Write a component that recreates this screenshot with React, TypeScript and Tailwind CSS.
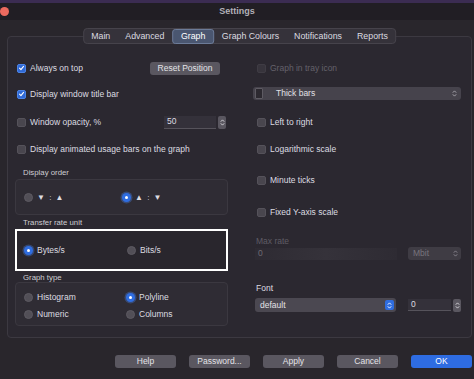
import React from 'react';

const SANS = "font-['Liberation_Sans',Arial,sans-serif]";

function CheckMark() {
    return (
        <svg viewBox="0 0 10 10" className="h-[8px] w-[8px]">
            <path d="M2.2 5.2 L4.2 7.2 L7.9 2.8" fill="none" stroke="white" strokeWidth="1.6" strokeLinecap="round" strokeLinejoin="round" />
        </svg>
    );
}

function Chevrons({ color = '#d8d7dc' }: { color?: string }) {
    return (
        <svg viewBox="0 0 8 13" className="h-[11px] w-[7px]">
            <path d="M2.3 5.2 L4 3.4 L5.7 5.2" fill="none" stroke={color} strokeWidth="1.1" strokeLinecap="round" strokeLinejoin="round" />
            <path d="M2.3 7.8 L4 9.6 L5.7 7.8" fill="none" stroke={color} strokeWidth="1.1" strokeLinecap="round" strokeLinejoin="round" />
        </svg>
    );
}

function Stepper() {
    return (
        <span className="flex h-[13px] w-[8px] items-center justify-center rounded-[2px] bg-[#5a5760]">
            <Chevrons />
        </span>
    );
}

function Checkbox({ label, checked = false, disabled = false }: { label: string; checked?: boolean; disabled?: boolean }) {
    const box = checked
        ? 'border-[#4d84e6] bg-[#2f69d6]'
        : disabled
          ? 'border-[#3f3c44] bg-[#37343c]'
          : 'border-[#55525a] bg-[#49464e]';
    return (
        <div className="flex h-[14px] items-center gap-[4px] whitespace-nowrap">
            <span className={`flex h-[9px] w-[9px] items-center justify-center rounded-[2px] border ${box}`}>
                {checked && <CheckMark />}
            </span>
            <span className={disabled ? 'text-[#64616a]' : 'text-[#dddce1]'}>{label}</span>
        </div>
    );
}

function Radio({ checked = false }: { checked?: boolean }) {
    if (checked) {
        return (
            <span className="flex h-[9px] w-[9px] items-center justify-center rounded-full bg-[#2f6de0] shadow-[0_0_0_1.5px_rgba(74,132,238,0.35)]">
                <span className="h-[3px] w-[3px] rounded-full bg-white" />
            </span>
        );
    }
    return <span className="h-[9px] w-[9px] rounded-full border border-[#5d5a62] bg-[#524f57]" />;
}

function RadioItem({ label, checked, width }: { label: React.ReactNode; checked?: boolean; width?: string }) {
    return (
        <div className={`flex items-center gap-[4px] whitespace-nowrap ${width ?? ''}`}>
            <Radio checked={checked} />
            <span className="text-[#dddce1]">{label}</span>
        </div>
    );
}

function Button({ label, primary = false, className = '' }: { label: string; primary?: boolean; className?: string }) {
    return (
        <div
            className={`flex h-[13px] items-center justify-center rounded-[3px] text-[8.5px] ${
                primary ? 'bg-[#2e6ce2] text-white' : 'bg-[#5a5760] text-[#e4e3e8]'
            } ${className}`}
        >
            {label}
        </div>
    );
}

const TABS = ['Main', 'Advanced', 'Graph', 'Graph Colours', 'Notifications', 'Reports'];

function TabBar() {
    return (
        <div className="absolute left-1/2 top-[-9px] flex h-[16px] -translate-x-1/2 items-center whitespace-nowrap rounded-[4px] border border-[#46434b] bg-[#35323a] text-[8.8px] text-[#dcdbe0]">
            {TABS.map((t) =>
                t === 'Graph' ? (
                    <span
                        key={t}
                        className="flex h-[15px] items-center rounded-[3px] border border-[#6c7b98] bg-[#4a5670] px-[8px] text-white"
                    >
                        {t}
                    </span>
                ) : (
                    <span key={t} className="flex h-[15px] items-center px-[7.5px]">
                        {t}
                    </span>
                ),
            )}
        </div>
    );
}

function LeftColumn() {
    return (
        <div className="flex w-[213px] flex-col">
            <div className="mt-[24px] flex h-[14px] items-center justify-between pl-[2px] pr-[8px]">
                <Checkbox label="Always on top" checked />
                <Button label="Reset Position" className="w-[70px]" />
            </div>
            <div className="mt-[12px] pl-[2px]">
                <Checkbox label="Display window title bar" checked />
            </div>
            <div className="mt-[14px] flex h-[14px] items-center justify-between pl-[2px] pr-[2px]">
                <Checkbox label="Window opacity, %" />
                <div className="flex items-center gap-[2px]">
                    <span className="flex h-[13px] w-[52px] items-center border-b border-[#56535b] bg-[#34313a] pl-[3px] text-[#dddce1]">
                        50
                    </span>
                    <Stepper />
                </div>
            </div>
            <div className="mt-[13px] pl-[2px]">
                <Checkbox label="Display animated usage bars on the graph" />
            </div>

            <div className="mt-[12px] flex h-[10px] items-center pl-[8px] text-[7.8px] text-[#cfced3]">Display order</div>
            <div className="mt-[1px] flex h-[36px] items-center rounded-[4px] border border-[#3b3840] bg-[#2f2c34] pl-[8px]">
                <RadioItem
                    width="w-[98px]"
                    label={<span className="text-[8px] tracking-[1px]">▼ : ▲</span>}
                />
                <RadioItem checked label={<span className="text-[8px] tracking-[1px]">▲ : ▼</span>} />
            </div>

            <div className="mt-[3px] flex h-[10px] items-center pl-[8px] text-[7.8px] text-[#cfced3]">Transfer rate unit</div>
            <div className="mt-[1px] flex h-[42px] items-center border-2 border-white bg-[#29262d] pl-[7px]">
                <RadioItem checked label="Bytes/s" width="w-[103px]" />
                <RadioItem label="Bits/s" />
            </div>

            <div className="mt-[2px] flex h-[9px] items-center pl-[8px] text-[7.8px] text-[#cfced3]">Graph type</div>
            <div className="flex h-[44px] flex-col gap-[5px] rounded-[4px] border border-[#3b3840] bg-[#2f2c34] pl-[8px] pt-[8px]">
                <div className="flex h-[12px] items-center">
                    <RadioItem label="Histogram" width="w-[102px]" />
                    <RadioItem label="Polyline" checked />
                </div>
                <div className="flex h-[12px] items-center">
                    <RadioItem label="Numeric" width="w-[102px]" />
                    <RadioItem label="Columns" />
                </div>
            </div>
        </div>
    );
}

function RightColumn() {
    return (
        <div className="flex w-[210px] flex-col">
            <div className="mt-[24px] pl-[4px]">
                <Checkbox label="Graph in tray icon" disabled />
            </div>
            <div className="mt-[12px] flex h-[13px] w-[208px] items-center rounded-[3px] bg-[#46434c] pl-[2px] pr-[3px] text-[#e2e1e6]">
                <span className="h-[11px] w-[8px] rounded-[1px] border border-[#5e5b63] bg-[#2c2930]" />
                <span className="ml-[13px] flex-1">Thick bars</span>
                <Chevrons color="#a9a7ae" />
            </div>
            <div className="mt-[15px] pl-[4px]">
                <Checkbox label="Left to right" />
            </div>
            <div className="mt-[13px] pl-[4px]">
                <Checkbox label="Logarithmic scale" />
            </div>
            <div className="mt-[17px] pl-[4px]">
                <Checkbox label="Minute ticks" />
            </div>
            <div className="mt-[18px] pl-[4px]">
                <Checkbox label="Fixed Y-axis scale" />
            </div>

            <div className="mt-[17px] flex h-[10px] items-center pl-[3px] text-[#5f5c65]">Max rate</div>
            <div className="mt-[1px] flex h-[13px] items-center pl-[2px]">
                <span className="flex h-[12px] w-[142px] items-center bg-[linear-gradient(90deg,#2e2b33,#35323a_50%,#2e2b33)] pl-[3px] text-[#6e6b73]">
                    0
                </span>
                <span className="ml-[11px] flex h-[13px] w-[53px] items-center justify-between rounded-[3px] bg-[#3f3c44] pl-[5px] pr-[2px] text-[#78757d]">
                    Mbit
                    <Chevrons color="#8a8790" />
                </span>
            </div>

            <div className="mt-[23px] flex h-[10px] items-center pl-[3px] text-[#dddce1]">Font</div>
            <div className="mt-[5px] flex h-[14px] items-center pl-[2px]">
                <span className="flex h-[14px] w-[141px] items-center justify-between rounded-[3px] bg-[#4b4851] pl-[5px] pr-[2px] text-[#e2e1e6]">
                    default
                    <span className="flex h-[10px] w-[9px] items-center justify-center rounded-[2px] bg-[#2f6de0]">
                        <Chevrons color="#ffffff" />
                    </span>
                </span>
                <span className="ml-[12px] flex h-[12px] w-[43px] items-center border-b border-[#56535b] bg-[#34313a] pl-[3px] text-[#dddce1]">
                    0
                </span>
                <span className="ml-[2px]">
                    <Stepper />
                </span>
            </div>
        </div>
    );
}

export default function App() {
    return (
        <div className={`relative h-[379px] w-[474px] overflow-hidden bg-[#29262c] text-[8.5px] leading-none ${SANS}`}>
            <div className="h-[3px] bg-[#3b2c52]" />
            <div className="relative flex h-[17px] items-center justify-center bg-[#211e24]">
                <span className="absolute left-0 top-[4px] h-[9px] w-[9px] rounded-full bg-[#ec6a5f]" />
                <span className="text-[9px] font-bold text-[#b3b1b8]">Settings</span>
            </div>

            <div className="relative ml-[7px] mt-[16px] w-[465px] rounded-[4px] border border-[#3c3941] bg-[#2b2830] pb-[11px]">
                <TabBar />
                <div className="flex gap-[25px] pl-[7px]">
                    <LeftColumn />
                    <RightColumn />
                </div>
            </div>

            <div className="mt-[17px] flex justify-end gap-[13px] pr-[2px]">
                <Button label="Help" className="w-[61px]" />
                <Button label="Password..." className="w-[61px]" />
                <Button label="Apply" className="w-[61px]" />
                <Button label="Cancel" className="w-[61px]" />
                <Button label="OK" primary className="w-[61px]" />
            </div>
        </div>
    );
}
